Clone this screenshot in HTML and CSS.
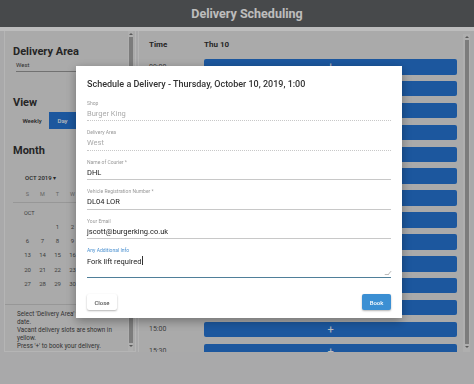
FILE: index.html
```html
<!DOCTYPE html>
<html lang="en">
<head>
  <meta charset="UTF-8">
  <title>Delivery Scheduling</title>
  <link rel="stylesheet" href="styles.css">
</head>
<body>
  <header class="app-bar">Delivery Scheduling</header>

  <div class="main">
    <aside class="side-panel">
      <div class="side-content">
        <h2 class="side-title">Delivery Area</h2>
        <div class="select-field">West</div>

        <h2 class="side-title">View</h2>
        <div class="view-toggle">
          <span class="toggle-btn">Weekly</span>
          <span class="toggle-btn active">Day</span>
        </div>

        <h2 class="side-title">Month</h2>
        <div class="calendar">
          <div class="cal-month">OCT 2019 &#9662;</div>
          <div class="cal-grid cal-days">
            <span>S</span><span>M</span><span>T</span><span>W</span><span>T</span><span>F</span><span>S</span>
          </div>
          <div class="cal-label">OCT</div>
          <div class="cal-grid cal-dates">
            <span></span><span></span><span>1</span><span>2</span><span>3</span><span>4</span><span>5</span>
            <span>6</span><span>7</span><span>8</span><span>9</span><span>10</span><span>11</span><span>12</span>
            <span>13</span><span>14</span><span>15</span><span>16</span><span>17</span><span>18</span><span>19</span>
            <span>20</span><span>21</span><span>22</span><span>23</span><span>24</span><span>25</span><span>26</span>
            <span>27</span><span>28</span><span>29</span><span>30</span><span>31</span><span></span><span></span>
          </div>
        </div>

        <div class="help">
          Select 'Delivery Area' then choose a date.<br>
          Vacant delivery slots are shown in yellow.<br>
          Press '+' to book your delivery.
        </div>
      </div>
      <div class="scrollbar">
        <span class="arrow up"></span>
        <span class="thumb"></span>
        <span class="arrow down"></span>
      </div>
    </aside>

    <section class="day-panel">
      <div class="day-content">
        <div class="slot-row slot-head">
          <span class="slot-time">Time</span>
          <span class="slot-day">Thu 10</span>
        </div>
        <div id="slots"></div>
      </div>
      <div class="scrollbar wide">
        <span class="arrow up"></span>
        <span class="thumb"></span>
        <span class="arrow down"></span>
      </div>
    </section>
  </div>

  <div class="backdrop"></div>

  <div class="dialog">
    <h3 class="dialog-title">Schedule a Delivery - Thursday, October 10, 2019, 1:00</h3>

    <div class="field disabled">
      <label>Shop</label>
      <div class="value">Burger King</div>
    </div>
    <div class="field disabled">
      <label>Delivery Area</label>
      <div class="value">West</div>
    </div>
    <div class="field">
      <label>Name of Courier *</label>
      <div class="value">DHL</div>
    </div>
    <div class="field">
      <label>Vehicle Registration Number *</label>
      <div class="value">DL04 LOR</div>
    </div>
    <div class="field">
      <label>Your Email</label>
      <div class="value">jscott@burgerking.co.uk</div>
    </div>
    <div class="field focused">
      <label>Any Additional Info</label>
      <div class="value textarea">Fork lift required<span class="caret"></span></div>
      <span class="resize"></span>
    </div>

    <div class="dialog-actions">
      <button class="btn">Close</button>
      <button class="btn primary">Book</button>
    </div>
  </div>

  <script>
    const times = ['09:00', '09:30', '10:00', '10:30', '11:00', '11:30', '12:00',
                   '12:30', '13:00', '13:30', '14:00', '14:30', '15:00', '15:30'];
    const slots = document.getElementById('slots');

    times.forEach(time => {
      const row = document.createElement('div');
      row.className = 'slot-row';
      row.innerHTML = `<span class="slot-time">${time}</span><span class="slot-btn">+</span>`;
      slots.appendChild(row);
    });
  </script>
</body>
</html>
```

FILE: styles.css
```css
* {
  box-sizing: border-box;
}

body {
  margin: 0;
  height: 384px;
  overflow: hidden;
  background: #e4e4e6;
  font-family: Roboto, "Liberation Sans", sans-serif;
  color: #333;
}

.app-bar {
  height: 27px;
  padding-left: 20px;
  line-height: 27px;
  background: #616366;
  color: #fff;
  font-size: 12.5px;
  font-weight: bold;
  text-align: center;
}

.main {
  display: flex;
  gap: 2px;
  height: 325px;
  padding: 0 3px 0 4px;
  border-top: 4px solid #fff;
}

/* left column */

.side-panel {
  display: flex;
  width: 132px;
  background: #e6e6e6;
  border: 1px solid #f4f4f4;
  border-top: none;
  overflow: hidden;
}

.side-content {
  flex: 1;
  padding: 14px 0 0 8px;
}

.side-title {
  margin: 0;
  font-size: 11px;
  line-height: 14px;
  font-weight: bold;
  color: #333;
}

.select-field {
  margin: 1px 0 0 3px;
  padding-bottom: 2px;
  font-size: 6px;
  line-height: 9px;
  color: #444;
  border-bottom: 1px solid #999;
}

.select-field + .side-title {
  margin-top: 24px;
}

.view-toggle {
  display: flex;
  gap: 4px;
  margin: 2px 0 0 6px;
}

.toggle-btn {
  width: 26px;
  height: 17px;
  line-height: 17px;
  font-size: 6px;
  font-weight: 500;
  text-align: center;
  color: #333;
}

.toggle-btn.active {
  width: 27px;
  background: #2676d6;
  color: #fff;
}

.view-toggle + .side-title {
  margin-top: 15px;
}

.calendar {
  margin-top: 16px;
  font-size: 5.5px;
}

.cal-month {
  padding-left: 12px;
  font-size: 6px;
  font-weight: 500;
  line-height: 8px;
  color: #333;
}

.cal-grid {
  display: grid;
  grid-template-columns: repeat(7, 15px);
  padding-left: 7px;
  text-align: center;
}

.cal-days {
  margin-top: 8px;
  padding-bottom: 4px;
  line-height: 8px;
  color: #888;
  border-bottom: 1px solid #ccc;
}

.cal-label {
  padding-left: 11px;
  line-height: 12px;
  margin-top: 4px;
  color: #555;
}

.cal-dates {
  margin-top: 1px;
  grid-auto-rows: 14.2px;
  line-height: 14px;
  font-size: 6px;
  color: #555;
}

.help {
  margin: 13px 0 0 -8px;
  padding: 5px 10px 0 12px;
  font-size: 6.3px;
  line-height: 8px;
  color: #444;
  border-top: 1px solid #ccc;
}

.scrollbar {
  display: flex;
  flex-direction: column;
  align-items: center;
  width: 5px;
  margin: 0 2px 0 0;
  background: #ededed;
}

.scrollbar .thumb {
  flex: 1;
  width: 4px;
  margin: 2px 0;
  background: #a8a8a8;
}

.arrow {
  width: 0;
  height: 0;
  margin-top: 2px;
  border-left: 2px solid transparent;
  border-right: 2px solid transparent;
}

.arrow.up {
  border-bottom: 2px solid #777;
}

.arrow.down {
  margin: 0 0 4px;
  border-top: 2px solid #777;
}

/* day column */

.day-panel {
  display: flex;
  flex: 1;
  background: #e6e6e6;
  border-left: 1px solid #f4f4f4;
  overflow: hidden;
}

.day-content {
  flex: 1;
  padding: 7px 0 0 10px;
}

.slot-row {
  display: flex;
  align-items: center;
  height: 15.5px;
  margin-bottom: 6.4px;
}

.slot-head {
  height: 12px;
  margin-bottom: 9px;
  font-size: 8px;
  font-weight: bold;
}

.slot-time {
  width: 55px;
  font-size: 7px;
  color: #555;
}

.slot-head .slot-time,
.slot-head .slot-day {
  font-size: 8px;
  color: #333;
}

.slot-btn {
  width: 253px;
  height: 100%;
  line-height: 15px;
  background: #2676d6;
  border-radius: 2px;
  color: #fff;
  font-size: 11px;
  text-align: center;
}

.scrollbar.wide {
  width: 7px;
  margin: 3px 1px 0 0;
}

.scrollbar.wide .thumb {
  width: 4px;
}

/* modal */

.backdrop {
  position: fixed;
  inset: 0;
  background: rgba(0, 0, 0, 0.26);
}

.dialog {
  position: fixed;
  left: 76px;
  top: 66px;
  width: 326px;
  height: 252px;
  padding: 12px 11px 8px;
  background: #fff;
  box-shadow: 0 3px 10px rgba(0, 0, 0, 0.35);
}

.dialog-title {
  margin: 0 0 1.5px;
  font-size: 9px;
  line-height: 12px;
  font-weight: 500;
  color: #333;
}

.field {
  position: relative;
  padding: 7px 0 1.5px;
  border-bottom: 1px solid #c8c8c8;
}

.field label {
  display: block;
  font-size: 5px;
  line-height: 8px;
  color: #999;
}

.field .value {
  margin-top: 2px;
  font-size: 7.5px;
  line-height: 10px;
  color: #222;
}

.field.disabled .value {
  color: #aaa;
}

.field.disabled {
  border-bottom-style: dotted;
}

.field.focused {
  padding-bottom: 0;
  border-bottom: 1.5px solid #4f7f99;
}

.field.focused label {
  color: #4a90d0;
}

.field .textarea {
  height: 21px;
}

.caret {
  display: inline-block;
  width: 1px;
  height: 9px;
  margin-left: 1px;
  vertical-align: -1px;
  background: #333;
}

.resize {
  position: absolute;
  right: 1px;
  bottom: 2px;
  width: 4px;
  height: 4px;
  border-right: 1px solid #bbb;
  border-bottom: 1px solid #bbb;
  transform: skewX(-40deg);
}

.dialog-actions {
  display: flex;
  justify-content: space-between;
  margin-top: 16px;
}

.btn {
  width: 30px;
  height: 16px;
  padding: 0;
  border: none;
  border-radius: 2px;
  background: #fff;
  box-shadow: 0 1px 2px rgba(0, 0, 0, 0.3);
  font-family: inherit;
  font-size: 6px;
  font-weight: 500;
  color: #555;
}

.btn.primary {
  width: 29px;
  background: #3b8fd3;
  color: #fff;
}
```
